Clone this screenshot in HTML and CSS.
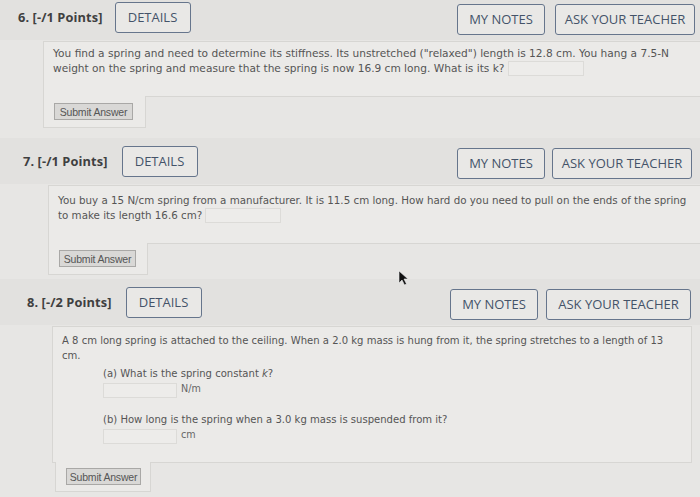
FILE: index.html
```html
<!DOCTYPE html>
<html>
<head>
<meta charset="utf-8">
<link rel="stylesheet" href="styles.css">
</head>
<body>
<div class="page">
  <section class="q q6">
    <div class="q-head">
      <span class="num">6. [-/1 Points]</span>
      <span class="btn details">DETAILS</span>
      <span class="grow"></span>
      <span class="btn notes">MY NOTES</span>
      <span class="btn ask">ASK YOUR TEACHER</span>
    </div>
    <div class="q-body">
      <p class="text">You find a spring and need to determine its stiffness. Its unstretched ("relaxed") length is 12.8 cm. You hang a 7.5-N<br>weight on the spring and measure that the spring is now 16.9 cm long. What is its k? <span class="field"></span></p>
    </div>
    <div class="submit-tab"><span class="submit">Submit Answer</span></div>
  </section>

  <section class="q q7">
    <div class="q-head">
      <span class="num">7. [-/1 Points]</span>
      <span class="btn details">DETAILS</span>
      <span class="grow"></span>
      <span class="btn notes">MY NOTES</span>
      <span class="btn ask">ASK YOUR TEACHER</span>
    </div>
    <div class="q-body">
      <p class="text">You buy a 15 N/cm spring from a manufacturer. It is 11.5 cm long. How hard do you need to pull on the ends of the spring<br>to make its length 16.6 cm? <span class="field"></span></p>
    </div>
    <div class="submit-tab"><span class="submit">Submit Answer</span></div>
  </section>

  <section class="q q8">
    <div class="q-head">
      <span class="num">8. [-/2 Points]</span>
      <span class="btn details">DETAILS</span>
      <span class="grow"></span>
      <span class="btn notes">MY NOTES</span>
      <span class="btn ask">ASK YOUR TEACHER</span>
    </div>
    <div class="q-body">
      <p class="text">A 8 cm long spring is attached to the ceiling. When a 2.0 kg mass is hung from it, the spring stretches to a length of 13<br>cm.</p>
      <div class="part">
        <p class="text">(a) What is the spring constant <i>k</i>?</p>
        <div class="ans"><span class="field wide"></span><span class="unit">N/m</span></div>
      </div>
      <div class="part part-b">
        <p class="text">(b) How long is the spring when a 3.0 kg mass is suspended from it?</p>
        <div class="ans"><span class="field wide"></span><span class="unit">cm</span></div>
      </div>
    </div>
    <div class="submit-tab"><span class="submit">Submit Answer</span></div>
  </section>

  <svg class="cursor" width="12" height="16" viewBox="0 0 12 16"><path d="M1 1 L1 13 L4 10 L6.5 15 L8.5 14 L6 9 L10 9 Z" fill="#111" stroke="#eee" stroke-width="0.6"/></svg>
</div>
</body>
</html>
```
FILE: styles.css
```css
html, body {
  margin: 0;
  padding: 0;
}
body {
  background: #e7e6e4;
  width: 700px;
  height: 497px;
  overflow: hidden;
}
.page {
  position: relative;
  width: 700px;
  height: 497px;
}
.q {
  display: flex;
  flex-direction: column;
}
.q6 { margin-top: -6px; }
.q7 { margin-top: 10px; }
.q8 { margin-top: 4px; }

.q-head {
  display: flex;
  align-items: center;
  height: 46px;
  background: #e2e1df;
  font-family: "Open Sans", "DejaVu Sans", sans-serif;
}
.q6 .q-head { padding: 0 5px 0 18px; }
.q7 .q-head { padding: 0 8px 0 23px; }
.q8 .q-head { padding: 0 9px 0 27px; }

.num {
  font-weight: 700;
  font-size: 12.8px;
  color: #3f3f3f;
  letter-spacing: 0.1px;
}
.btn {
  box-sizing: border-box;
  display: flex;
  align-items: center;
  justify-content: center;
  height: 31px;
  border: 1.5px solid #66758c;
  border-radius: 3px;
  color: #445369;
  font-size: 13px;
  background: #e9e8e6;
}
.details { width: 76px; margin-left: 12px; }
.q7 .details { margin-left: 14px; }
.q8 .details { margin-left: 14px; }
.notes { width: 88px; margin-top: 4px; }
.ask { width: 140px; margin-left: 10px; margin-top: 4px; }
.q7 .ask { margin-left: 7px; }
.q8 .ask { width: 145px; margin-left: 8px; }
.grow { flex: 1; }

.q-body {
  box-sizing: border-box;
  background: #ebeae8;
  border: 1px solid #d7d6d3;
  border-right: none;
  padding: 4px 10px 20px 9px;
  margin-top: 1px;
}
.q6 .q-body { margin-left: 43px; margin-right: -2px; }
.q7 .q-body { margin-left: 48px; margin-right: -2px; padding-top: 7px; }
.q8 .q-body { margin-left: 52px; margin-right: 8px; border-right: 1px solid #d7d6d3; padding-top: 6px; padding-bottom: 18px; }

.text {
  margin: 0;
  font-family: "DejaVu Sans", Verdana, sans-serif;
  font-size: 10.6px;
  line-height: 15px;
  color: #555;
  white-space: nowrap;
}
.q7 .text { font-size: 10.3px; }
.q8 .text { font-size: 10.05px; }
.field {
  display: inline-block;
  width: 76px;
  height: 15px;
  vertical-align: -4px;
  border: 1px solid #dcdbd8;
  background: #edecea;
  box-sizing: border-box;
}
.part { margin-left: 41px; margin-top: 3px; }
.part-b { margin-top: 14px; }
.ans {
  display: flex;
  align-items: center;
  margin-top: 2px;
}
.field.wide { width: 74px; height: 15px; }
.unit {
  font-family: "DejaVu Sans", Verdana, sans-serif;
  font-size: 9.6px;
  color: #666;
  margin-left: 4px;
  margin-top: -5px;
}

.submit-tab {
  box-sizing: border-box;
  width: 103px;
  height: 32px;
  margin-top: -1px;
  background: #ebeae8;
  border: 1px solid #d7d6d3;
  border-top: none;
  display: flex;
  align-items: center;
  padding-left: 10px;
}
.q6 .submit-tab { margin-left: 43px; }
.q7 .submit-tab { margin-left: 48px; width: 100px; }
.q8 .submit-tab { margin-left: 55px; width: 96px; height: 30px; }

.submit {
  box-sizing: border-box;
  display: inline-flex;
  align-items: center;
  justify-content: center;
  width: 79px;
  height: 17px;
  background: #d9d8d6;
  border: 1px solid #a9a8a6;
  font-family: "Liberation Sans", Arial, sans-serif;
  font-size: 10.5px;
  color: #555;
  letter-spacing: -0.2px;
}
.q7 .submit { width: 77px; }
.q8 .submit { width: 75px; }

.cursor {
  position: absolute;
  left: 398px;
  top: 276px;
}
```
